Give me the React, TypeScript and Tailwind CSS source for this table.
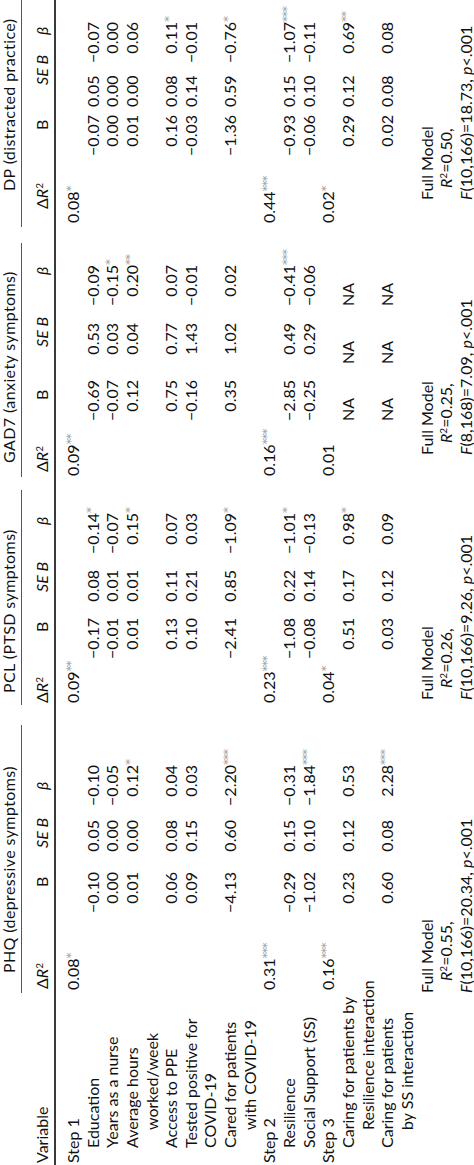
import React from "react";

type Col = { w: string; num: string; star: string; head: string };
type Group = {
  title: string;
  titleCell: string;
  span: string;
  dr2: { w: string; pad: string; head: string };
  cols: Col[];
  full: { pad: string; r2pad: string; r2: string; df: string; f: string };
};

const groups: Group[] = [
  {
    title: "PHQ (depressive symptoms)",
    titleCell: "w-[268px] mr-[20px] pl-[20px]",
    span: "w-[283px]",
    dr2: { w: "w-[78px]", pad: "pl-[3px]", head: "pl-[4px]" },
    cols: [
      { w: "w-[55px]", num: "w-[43px]", star: "w-[12px]", head: "pl-[28px]" },
      { w: "w-[52px]", num: "w-[40px]", star: "w-[12px]", head: "pl-[12px]" },
      { w: "w-[98px]", num: "w-[43px]", star: "w-[55px]", head: "pl-[18px]" },
    ],
    full: { pad: "pl-[0px]", r2pad: "pl-[12px]", r2: "0.55", df: "10,166", f: "20.34" },
  },
  {
    title: "PCL (PTSD symptoms)",
    titleCell: "w-[215px] mr-[13px] pl-[12px]",
    span: "w-[229px]",
    dr2: { w: "w-[50px]", pad: "pl-[7px]", head: "pl-[7px]" },
    cols: [
      { w: "w-[52px]", num: "w-[42px]", star: "w-[10px]", head: "pl-[28px]" },
      { w: "w-[48px]", num: "w-[38px]", star: "w-[10px]", head: "pl-[16px]" },
      { w: "w-[79px]", num: "w-[47px]", star: "w-[32px]", head: "pl-[35px]" },
    ],
    full: { pad: "pl-[10px]", r2pad: "pl-[22px]", r2: "0.26", df: "10,166", f: "9.26" },
  },
  {
    title: "GAD7 (anxiety symptoms)",
    titleCell: "w-[234px] mr-[16px] pl-[14px]",
    span: "w-[250px]",
    dr2: { w: "w-[56px]", pad: "pl-[5px]", head: "pl-[9px]" },
    cols: [
      { w: "w-[57px]", num: "w-[45px]", star: "w-[12px]", head: "pl-[25px]" },
      { w: "w-[55px]", num: "w-[45px]", star: "w-[10px]", head: "pl-[21px]" },
      { w: "w-[82px]", num: "w-[48px]", star: "w-[34px]", head: "pl-[38px]" },
    ],
    full: { pad: "pl-[26px]", r2pad: "pl-[38px]", r2: "0.25", df: "8,168", f: "7.09" },
  },
  {
    title: "DP (distracted practice)",
    titleCell: "w-[227px] pl-[36px]",
    span: "w-[231px]",
    dr2: { w: "w-[61px]", pad: "pl-[8px]", head: "pl-[22px]" },
    cols: [
      { w: "w-[63px]", num: "w-[55px]", star: "w-[8px]", head: "pl-[40px]" },
      { w: "w-[37px]", num: "w-[31px]", star: "w-[6px]", head: "pl-[22px]" },
      { w: "w-[70px]", num: "w-[48px]", star: "w-[22px]", head: "pl-[35px]" },
    ],
    full: { pad: "pl-[31px]", r2pad: "pl-[43px]", r2: "0.50", df: "10,166", f: "18.73" },
  },
];

type Row = { label: string; ind: 0 | 1 | 2; dr2?: string[]; v?: string[][] };

const rows: Row[] = [
  { label: "Step 1", ind: 0, dr2: ["0.08*", "0.09**", "0.09**", "0.08*"] },
  { label: "Education", ind: 1, v: [["−0.10", "0.05", "−0.10"], ["−0.17", "0.08", "−0.14*"], ["−0.69", "0.53", "−0.09"], ["−0.07", "0.05", "−0.07"]] },
  { label: "Years as a nurse", ind: 1, v: [["0.00", "0.00", "−0.05"], ["−0.01", "0.01", "−0.07"], ["−0.07", "0.03", "−0.15*"], ["0.00", "0.00", "0.00"]] },
  { label: "Average hours", ind: 1, v: [["0.01", "0.00", "0.12*"], ["0.01", "0.01", "0.15*"], ["0.12", "0.04", "0.20**"], ["0.01", "0.00", "0.06"]] },
  { label: "worked/week", ind: 2 },
  { label: "Access to PPE", ind: 1, v: [["0.06", "0.08", "0.04"], ["0.13", "0.11", "0.07"], ["0.75", "0.77", "0.07"], ["0.16", "0.08", "0.11*"]] },
  { label: "Tested positive for", ind: 1, v: [["0.09", "0.15", "0.03"], ["0.10", "0.21", "0.03"], ["−0.16", "1.43", "−0.01"], ["−0.03", "0.14", "−0.01"]] },
  { label: "COVID-19", ind: 1 },
  { label: "Cared for patients", ind: 1, v: [["−4.13", "0.60", "−2.20***"], ["−2.41", "0.85", "−1.09*"], ["0.35", "1.02", "0.02"], ["−1.36", "0.59", "−0.76*"]] },
  { label: "with COVID-19", ind: 2 },
  { label: "Step 2", ind: 0, dr2: ["0.31***", "0.23***", "0.16***", "0.44***"] },
  { label: "Resilience", ind: 1, v: [["−0.29", "0.15", "−0.31"], ["−1.08", "0.22", "−1.01*"], ["−2.85", "0.49", "−0.41***"], ["−0.93", "0.15", "−1.07***"]] },
  { label: "Social Support (SS)", ind: 1, v: [["−1.02", "0.10", "−1.84***"], ["−0.08", "0.14", "−0.13"], ["−0.25", "0.29", "−0.06"], ["−0.06", "0.10", "−0.11"]] },
  { label: "Step 3", ind: 0, dr2: ["0.16***", "0.04*", "0.01", "0.02*"] },
  { label: "Caring for patients by", ind: 1, v: [["0.23", "0.12", "0.53"], ["0.51", "0.17", "0.98*"], ["NA", "NA", "NA"], ["0.29", "0.12", "0.69**"]] },
  { label: "Resilience interaction", ind: 2 },
  { label: "Caring for patients", ind: 1, v: [["0.60", "0.08", "2.28***"], ["0.03", "0.12", "0.09"], ["NA", "NA", "NA"], ["0.02", "0.08", "0.08"]] },
  { label: "by SS interaction", ind: 2 },
];

const indent = ["pl-[2px]", "pl-[17px]", "pl-[35px]"];
const ROW = "flex h-[19.65px] leading-[19.65px] whitespace-nowrap";

function split(v: string) {
  const m = v.match(/^(.*?)(\**)$/);
  return { n: m ? m[1] : v, s: m ? m[2] : "" };
}

// significance stars: light grey, raised
function Stars({ s }: { s: string }) {
  if (!s) return null;
  return (
    <span className="font-['DejaVu_Sans',sans-serif] text-[12px] leading-none tracking-[-1px] text-[#9d9d9d] pt-[2px] self-start">
      {s}
    </span>
  );
}

function Num({ v, c }: { v?: string; c: Col }) {
  if (!v) return <div className={`${c.w} shrink-0`} />;
  const { n, s } = split(v);
  const na = n === "NA";
  return (
    <div className={`${c.w} shrink-0 flex`}>
      <span className={`${c.num} shrink-0 text-right ${na ? "pr-[18px]" : ""}`}>{n}</span>
      <span className={`${c.star} shrink-0 flex`}>
        <Stars s={s} />
      </span>
    </div>
  );
}

function Dr2({ v, g }: { v?: string; g: Group }) {
  const { n, s } = split(v ?? "");
  return (
    <div className={`${g.dr2.w} ${g.dr2.pad} shrink-0 flex`}>
      <span>{n}</span>
      <Stars s={s} />
    </div>
  );
}

function R2() {
  return (
    <>
      <i>R</i>
      <sup className="text-[10px]">2</sup>
    </>
  );
}

export default function App() {
  return (
    <div className="w-[474px] h-[1165px] overflow-hidden bg-white">
      <div className="w-[1165px] h-[474px] origin-top-left -rotate-90 translate-y-[1165px] text-[16px] text-[#111] font-['Lato','Noto_Sans',sans-serif]">
        {/* group titles */}
        <div className="flex h-[22px] pt-[1px] leading-[16px] whitespace-nowrap">
          <div className="w-[172px] shrink-0" />
          {groups.map((g) => (
            <div key={g.title} className={`${g.titleCell} shrink-0 border-b border-[#555] tracking-[0.4px]`}>
              {g.title}
            </div>
          ))}
        </div>

        {/* column heads */}
        <div className="flex h-[34px] pt-[10px] leading-[19.65px] whitespace-nowrap border-b-2 border-[#3a3a3a]">
          <div className="w-[172px] shrink-0 pl-[2px]">Variable</div>
          {groups.map((g) => (
            <div key={g.title} className={`${g.span} shrink-0 flex`}>
              <div className={`${g.dr2.w} ${g.dr2.head} shrink-0`}>
                Δ<R2 />
              </div>
              <div className={`${g.cols[0].w} ${g.cols[0].head} shrink-0`}>B</div>
              <div className={`${g.cols[1].w} ${g.cols[1].head} shrink-0 italic`}>SE B</div>
              <div className={`${g.cols[2].w} ${g.cols[2].head} shrink-0 italic`}>β</div>
            </div>
          ))}
        </div>

        {/* body */}
        <div className="pt-[7px]">
          {rows.map((r) => (
            <div key={r.label + r.ind} className={ROW}>
              <div className={`w-[172px] shrink-0 ${indent[r.ind]}`}>{r.label}</div>
              {groups.map((g, gi) => (
                <div key={g.title} className={`${g.span} shrink-0 flex`}>
                  <Dr2 v={r.dr2?.[gi]} g={g} />
                  {g.cols.map((c, ci) => (
                    <Num key={ci} v={r.v?.[gi][ci]} c={c} />
                  ))}
                </div>
              ))}
            </div>
          ))}

          <div className={ROW}>
            <div className="w-[172px] shrink-0" />
            {groups.map((g) => (
              <div key={g.title} className={`${g.span} ${g.full.pad} shrink-0`}>Full Model</div>
            ))}
          </div>
          <div className={ROW}>
            <div className="w-[172px] shrink-0" />
            {groups.map((g) => (
              <div key={g.title} className={`${g.span} ${g.full.r2pad} shrink-0`}>
                <R2 />={g.full.r2},
              </div>
            ))}
          </div>
          <div className={ROW}>
            <div className="w-[172px] shrink-0" />
            {groups.map((g) => (
              <div key={g.title} className={`${g.span} ${g.full.pad} shrink-0`}>
                <i>F</i>({g.full.df})={g.full.f}, <i>p</i>&lt;.001
              </div>
            ))}
          </div>
        </div>
      </div>
    </div>
  );
}
